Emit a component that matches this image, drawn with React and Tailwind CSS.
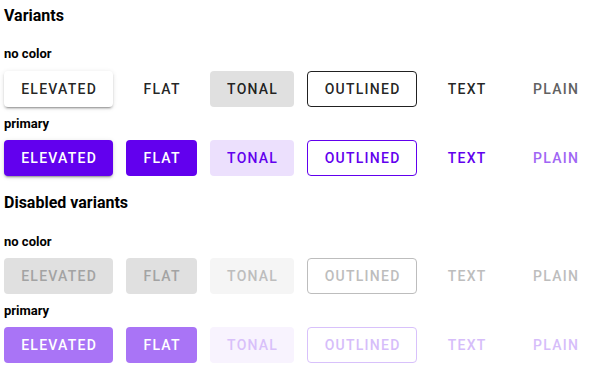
const VARIANTS = ['elevated', 'flat', 'tonal', 'outlined', 'text', 'plain'];

const widths = {
  elevated: 'w-[109px]',
  flat: 'w-[71px]',
  tonal: 'w-[84px]',
  outlined: 'w-[110px]',
  text: 'w-[73px]',
  plain: 'w-[79px]',
};

const styles = {
  none: {
    elevated: 'bg-white text-black/[0.87] shadow-[0_3px_1px_-2px_rgba(0,0,0,0.2),0_2px_2px_0_rgba(0,0,0,0.14),0_1px_5px_0_rgba(0,0,0,0.12)]',
    flat: 'bg-white text-black/[0.87]',
    tonal: 'bg-[#e0e0e0] text-black/[0.87]',
    outlined: 'border border-black/[0.87] text-black/[0.87]',
    text: 'text-black/[0.87]',
    plain: 'text-[#616161]',
  },
  primary: {
    elevated: 'bg-[#6200ee] text-white shadow-[0_3px_1px_-2px_rgba(0,0,0,0.2),0_2px_2px_0_rgba(0,0,0,0.14),0_1px_5px_0_rgba(0,0,0,0.12)]',
    flat: 'bg-[#6200ee] text-white',
    tonal: 'bg-[#ece0fd] text-[#6200ee]',
    outlined: 'border border-[#6200ee] text-[#6200ee]',
    text: 'text-[#6200ee]',
    plain: 'text-[#a066f4]',
  },
};

const disabledStyles = {
  none: {
    elevated: 'bg-[#e0e0e0] text-[#a3a3a3]',
    flat: 'bg-[#e0e0e0] text-[#a3a3a3]',
    tonal: 'bg-[#f5f5f5] text-[#bdbdbd]',
    outlined: 'border border-[#bdbdbd] text-[#bdbdbd]',
    text: 'text-[#bdbdbd]',
    plain: 'text-[#bdbdbd]',
  },
  primary: {
    elevated: 'bg-[#a974f6] text-white',
    flat: 'bg-[#a974f6] text-white',
    tonal: 'bg-[#f8f3fe] text-[#d8c0fa]',
    outlined: 'border border-[#d8c1fb] text-[#d6bdfa]',
    text: 'text-[#d6bdfa]',
    plain: 'text-[#d6bdfa]',
  },
};

function Btn({ variant, color, disabled }) {
  const look = disabled ? disabledStyles[color][variant] : styles[color][variant];
  return (
    <button
      type="button"
      className={`flex h-9 shrink-0 items-center justify-center rounded pl-[1.25px] text-sm font-medium uppercase tracking-[1.25px] ${widths[variant]} ${look}`}
    >
      {variant}
    </button>
  );
}

function Row({ color, disabled }) {
  return (
    <div className="flex gap-[13px]">
      {VARIANTS.map((v) => (
        <Btn key={v} variant={v} color={color} disabled={disabled} />
      ))}
    </div>
  );
}

export default function App() {
  return (
    <div className="min-h-screen bg-white px-1 pt-1 text-black font-['Roboto',sans-serif]">
      <h3 className="text-base font-bold leading-6">Variants</h3>
      <div className="mt-[18px] text-[13px] font-bold leading-4">no color</div>
      <div className="mt-[9px]">
        <Row color="none" />
      </div>
      <div className="mt-[9px] text-[13px] font-bold leading-4">primary</div>
      <div className="mt-2">
        <Row color="primary" />
      </div>

      <h3 className="mt-[15px] text-base font-bold leading-6">Disabled variants</h3>
      <div className="mt-[19px] text-[13px] font-bold leading-4">no color</div>
      <div className="mt-2">
        <Row color="none" disabled />
      </div>
      <div className="mt-[9px] text-[13px] font-bold leading-4">primary</div>
      <div className="mt-2">
        <Row color="primary" disabled />
      </div>
    </div>
  );
}
